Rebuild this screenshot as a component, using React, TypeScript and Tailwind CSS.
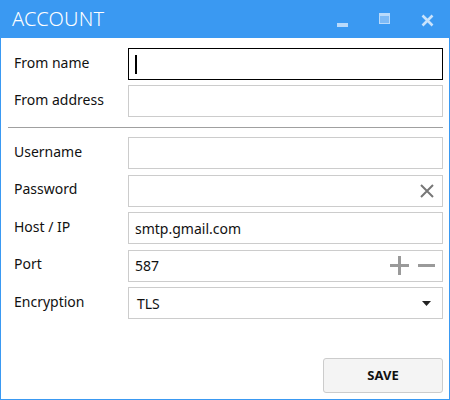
import React from "react";

const font = { fontFamily: '"Segoe UI", "Noto Sans", "Open Sans", sans-serif' };

function Row({ label, children }: { label: string; children: React.ReactNode }) {
  return (
    <div className="flex h-[32px] items-center">
      <div className="w-[127px] shrink-0 pl-[13px] text-[14px] text-[#111] leading-none -mt-[3px]">{label}</div>
      <div className="flex-1 h-full">{children}</div>
    </div>
  );
}

function Box({ children, focused }: { children?: React.ReactNode; focused?: boolean }) {
  return (
    <div
      className={
        "h-full w-full bg-white flex items-center px-[6px] text-[14px] text-[#111] " +
        (focused ? "border border-black" : "border border-[#cccccc]")
      }
    >
      {children}
    </div>
  );
}

export default function App() {
  return (
    <div className="w-[450px] h-[400px] bg-white border border-t-0 border-[#3a99f2] flex flex-col" style={font}>
      <div className="h-[38px] bg-[#3a99f2] flex items-center pl-[11px] shrink-0">
        <div className="text-[20px] font-light text-white tracking-[0.2px]">ACCOUNT</div>
        <div className="flex-1" />
        <div className="w-[11px] h-[4px] bg-[#b9dafb] mt-[11px] mr-[31px]" />
        <div className="w-[11px] h-[11px] border border-[#b9dafb] border-t-[3px] bg-[#7dbaf6] mr-[31px] -mt-[1px]" />
        <svg width="13" height="13" viewBox="0 0 13 13" className="mr-[15px] mt-[2px]">
          <path d="M1.5 1.5 L11.5 11.5 M11.5 1.5 L1.5 11.5" stroke="#c9e3fc" strokeWidth="2.6" />
        </svg>
      </div>
      <div className="flex flex-col pr-[6px] pt-[10px]">
        <div className="flex flex-col gap-[5px]">
          <Row label="From name">
            <Box focused>
              <div className="w-[2px] h-[19px] bg-black" />
            </Box>
          </Row>
          <Row label="From address">
            <Box />
          </Row>
        </div>
        <div className="h-px bg-[#a0a0a0] ml-[7px] mt-[10px] mb-[9px]" />
        <div className="flex flex-col gap-[5.5px]">
          <Row label="Username">
            <Box />
          </Row>
          <Row label="Password">
            <Box>
              <div className="flex-1" />
              <svg width="14" height="14" viewBox="0 0 14 14" className="mr-[2px]">
                <path d="M1 1 L13 13 M13 1 L1 13" stroke="#777" strokeWidth="2" />
              </svg>
            </Box>
          </Row>
          <Row label="Host / IP">
            <Box>smtp.gmail.com</Box>
          </Row>
          <Row label="Port">
            <Box>
              <span>587</span>
              <div className="flex-1" />
              <svg width="19" height="19" viewBox="0 0 19 19" className="mr-[9px]">
                <path d="M0 9.5 H19 M9.5 0 V19" stroke="#9a9a9a" strokeWidth="3" />
              </svg>
              <svg width="17" height="19" viewBox="0 0 17 19" className="mr-[1px]">
                <path d="M0 9.5 H17" stroke="#9a9a9a" strokeWidth="3" />
              </svg>
            </Box>
          </Row>
          <Row label="Encryption">
            <Box>
              <span className="ml-[2px]">TLS</span>
              <div className="flex-1" />
              <svg width="9" height="5" viewBox="0 0 9 5" className="mr-[5px]">
                <path d="M0 0 H9 L4.5 5 Z" fill="#222" />
              </svg>
            </Box>
          </Row>
        </div>
        <div className="flex justify-end mt-[39px]">
          <button className="w-[120px] h-[35px] rounded-[3px] border border-[#cccccc] bg-[#f4f4f4] text-[13px] font-bold text-[#111]">
            SAVE
          </button>
        </div>
      </div>
    </div>
  );
}
